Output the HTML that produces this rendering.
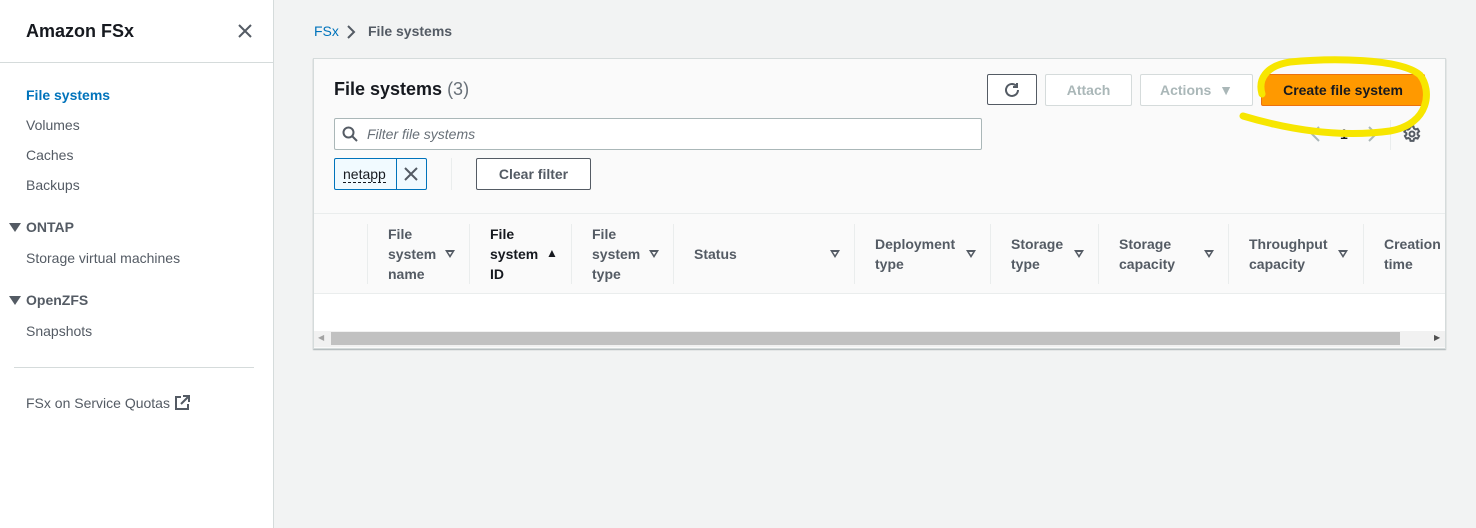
<!DOCTYPE html>
<html><head><meta charset="utf-8"><style>
*{box-sizing:border-box;margin:0;padding:0}
body{width:1476px;height:528px;overflow:hidden;background:#f2f3f3;font-family:"Liberation Sans",Arial,sans-serif;font-size:14px;color:#16191f;position:relative}
.a{position:absolute;white-space:nowrap}
#side{position:absolute;left:0;top:0;width:274px;height:528px;background:#fff;border-right:1px solid #d5dbdb}
.nav{color:#545b64;font-size:14px}
.b{font-weight:bold}
.btn{position:absolute;border:1px solid #545b64;background:#fff;border-radius:2px;font-weight:bold;text-align:center}
.th{position:absolute;top:224px;font-weight:bold;color:#545b64;font-size:14px;line-height:20px}
.sep{position:absolute;top:224px;width:1px;height:60px;background:#eaeded}
.tri{position:absolute;top:250px;width:0;height:0;border-left:5px solid transparent;border-right:5px solid transparent;border-top:8px solid #545b64}
.tri:after{content:"";position:absolute;left:-2px;top:-6px;border-left:2px solid transparent;border-right:2px solid transparent;border-top:3px solid #fafafa}
.st{position:absolute;left:9px;width:0;height:0;border-left:6px solid transparent;border-right:6px solid transparent;border-top:9px solid #545b64}
</style></head><body>
<div id="side">
<div class="a b" style="left:26px;top:21px;font-size:18px;color:#16191f">Amazon FSx</div>
<svg class="a" style="left:237px;top:23px" width="16" height="16" viewBox="0 0 16 16" stroke="#545b64" stroke-width="2"><path d="M2 2l12 12M14 2L2 14"/></svg>
<div style="position:absolute;left:0;top:62px;width:274px;height:1px;background:#d5dbdb"></div>
<div class="a b" style="left:26px;top:87px;color:#0073bb">File systems</div>
<div class="a nav" style="left:26px;top:117px">Volumes</div>
<div class="a nav" style="left:26px;top:147px">Caches</div>
<div class="a nav" style="left:26px;top:177px">Backups</div>
<div class="st" style="top:223px"></div>
<div class="a b" style="left:26px;top:219px;color:#545b64">ONTAP</div>
<div class="a nav" style="left:26px;top:250px">Storage virtual machines</div>
<div class="st" style="top:296px"></div>
<div class="a b" style="left:26px;top:292px;color:#545b64">OpenZFS</div>
<div class="a nav" style="left:26px;top:323px">Snapshots</div>
<div style="position:absolute;left:14px;top:367px;width:240px;height:1px;background:#d5dbdb"></div>
<div class="a nav" style="left:26px;top:395px">FSx on Service Quotas</div>
<svg class="a" style="left:174px;top:395px" width="16" height="16" viewBox="0 0 16 16" fill="none" stroke="#545b64" stroke-width="2"><path d="M7 2H2v12h12V9M9 1h6v6M15 1L7 9"/></svg>
</div>
<div class="a" style="left:314px;top:23px;color:#0073bb">FSx</div>
<svg class="a" style="left:346px;top:25px" width="10" height="14" viewBox="0 0 10 14" fill="none" stroke="#545b64" stroke-width="2"><path d="M2 1l6 6-6 6"/></svg>
<div class="a b" style="left:368px;top:23px;color:#545b64">File systems</div>

<div style="position:absolute;left:313px;top:58px;width:1133px;height:291px;background:#fafafa;border:1px solid #d5dbdb;box-shadow:0 1px 1px rgba(0,28,36,.3)"></div>
<div class="a" style="left:334px;top:79px;font-size:18px;font-weight:bold">File systems <span style="font-weight:normal;color:#687078">(3)</span></div>
<div class="btn" style="left:987px;top:74px;width:50px;height:31px"><svg width="18" height="18" viewBox="0 0 18 18" style="margin-top:6px" fill="none" stroke="#545b64" stroke-width="2"><path d="M15 9a6 6 0 1 1-2-4.5"/><path d="M14 2v4h-4"/></svg></div>
<div class="btn" style="left:1045px;top:74px;width:87px;height:32px;border-color:#d5dbdb;color:#aab7b8;line-height:30px">Attach</div>
<div class="btn" style="left:1140px;top:74px;width:113px;height:32px;border-color:#d5dbdb;color:#aab7b8;line-height:30px">Actions &nbsp;▼</div>
<div class="btn" style="left:1261px;top:74px;width:164px;height:32px;border-color:#ec7211;background:#ff9900;color:#16191f;line-height:30px">Create file system</div>
<div style="position:absolute;left:334px;top:118px;width:648px;height:32px;background:#fff;border:1px solid #aab7b8;border-radius:2px"></div>
<svg class="a" style="left:342px;top:126px" width="16" height="16" viewBox="0 0 16 16" fill="none" stroke="#545b64" stroke-width="2"><circle cx="6.5" cy="6.5" r="5"/><path d="M10 10l5 5"/></svg>
<div class="a" style="left:367px;top:126px;font-style:italic;color:#687078">Filter file systems</div>
<svg class="a" style="left:1310px;top:126px" width="12" height="16" viewBox="0 0 12 16" fill="none" stroke="#aab7b8" stroke-width="2"><path d="M9 1L2 8l7 7"/></svg>
<div class="a" style="left:1340px;top:126px;font-weight:bold">1</div>
<svg class="a" style="left:1366px;top:126px" width="12" height="16" viewBox="0 0 12 16" fill="none" stroke="#aab7b8" stroke-width="2"><path d="M3 1l7 7-7 7"/></svg>
<div style="position:absolute;left:1390px;top:120px;width:1px;height:30px;background:#eaeded"></div>
<svg class="a" style="left:1403px;top:125px" width="18" height="18" viewBox="0 0 18 18" fill="none" stroke="#545b64" stroke-width="2"><circle cx="9" cy="9" r="2.5"/><path d="M7.5 1.5h3l.5 2 1.6.9 2-.6 1.5 2.6-1.5 1.4v1.8l1.5 1.4-1.5 2.6-2-.6-1.6.9-.5 2h-3l-.5-2-1.6-.9-2 .6-1.5-2.6 1.5-1.4V8.1L1.4 6.7l1.5-2.6 2 .6 1.6-.9z"/></svg>
<div style="position:absolute;left:334px;top:158px;width:93px;height:32px;background:#f1faff;border:1px solid #0073bb;border-radius:2px"></div>
<div style="position:absolute;left:396px;top:159px;width:1px;height:30px;background:#0073bb"></div>
<div class="a" style="left:343px;top:166px;border-bottom:1px dashed #16191f;line-height:16px">netapp</div>
<svg class="a" style="left:404px;top:167px" width="14" height="14" viewBox="0 0 14 14" stroke="#545b64" stroke-width="2"><path d="M1 1l12 12M13 1L1 13"/></svg>
<div style="position:absolute;left:451px;top:158px;width:1px;height:32px;background:#eaeded"></div>
<div class="btn" style="left:476px;top:158px;width:115px;height:32px;line-height:30px;color:#545b64">Clear filter</div>

<div style="position:absolute;left:314px;top:213px;width:1131px;height:1px;background:#eaeded"></div>
<div class="sep" style="left:367px"></div><div class="sep" style="left:469px"></div><div class="sep" style="left:571px"></div><div class="sep" style="left:673px"></div><div class="sep" style="left:854px"></div><div class="sep" style="left:990px"></div><div class="sep" style="left:1098px"></div><div class="sep" style="left:1228px"></div><div class="sep" style="left:1363px"></div>
<div class="th" style="left:388px">File<br>system<br>name</div><div class="tri" style="left:445px"></div>
<div class="th" style="left:490px;color:#16191f">File<br>system<br>ID</div><div class="a" style="left:546px;top:246px;font-size:12px">▲</div>
<div class="th" style="left:592px">File<br>system<br>type</div><div class="tri" style="left:649px"></div>
<div class="th" style="left:694px;top:244px">Status</div><div class="tri" style="left:830px"></div>
<div class="th" style="left:875px;top:234px">Deployment<br>type</div><div class="tri" style="left:966px"></div>
<div class="th" style="left:1011px;top:234px">Storage<br>type</div><div class="tri" style="left:1074px"></div>
<div class="th" style="left:1119px;top:234px">Storage<br>capacity</div><div class="tri" style="left:1204px"></div>
<div class="th" style="left:1249px;top:234px">Throughput<br>capacity</div><div class="tri" style="left:1338px"></div>
<div class="th" style="left:1384px;top:234px">Creation<br>time</div>
<div style="position:absolute;left:314px;top:293px;width:1131px;height:38px;background:#fff;border-top:1px solid #eaeded"></div>
<div style="position:absolute;left:314px;top:331px;width:1131px;height:16px;background:#f1f1f1"></div>
<div style="position:absolute;left:331px;top:332px;width:1069px;height:13px;background:#c1c1c1"></div>
<div class="a" style="left:318px;top:333px;font-size:8px;color:#a3a3a3">◀</div>
<div class="a" style="left:1434px;top:333px;font-size:8px;color:#505050">▶</div>
<svg class="a" style="left:0;top:0" width="1476" height="528"><path d="M1243 116 C1290 130 1340 138 1390 131 C1430 124 1432 90 1420 75 C1400 58 1330 58 1290 62 C1265 66 1258 80 1262 94" fill="none" stroke="#f7e600" stroke-width="7" stroke-linecap="round"/></svg>
</body></html>
